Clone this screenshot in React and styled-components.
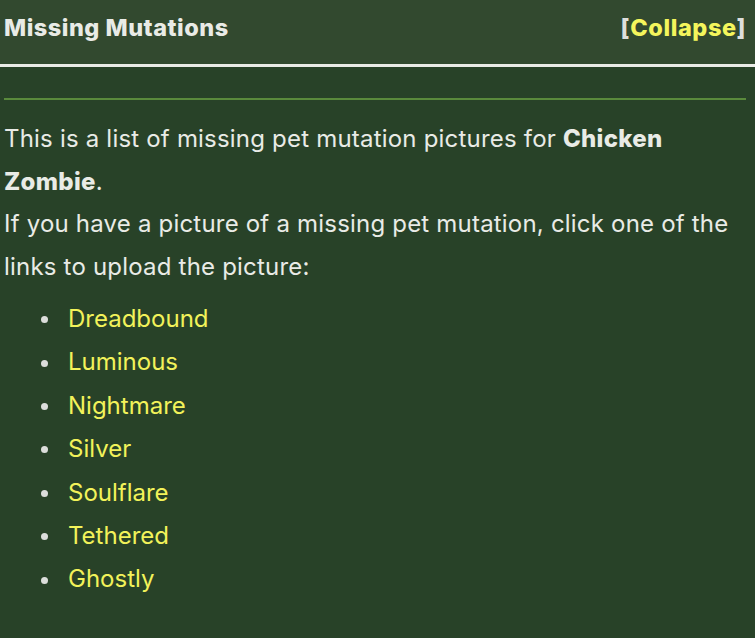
import React from "react";
import styled, { createGlobalStyle } from "styled-components";

const Global = createGlobalStyle`
  html, body { margin: 0; padding: 0; background: #284228; }
  body { font-family: Inter, "Noto Sans", sans-serif; }
`;

const Page = styled.div`
  width: 755px;
  height: 638px;
  background: #284228;
  overflow: hidden;
`;

const Header = styled.div`
  height: 67px;
  background: #32492f;
  border-bottom: 3px solid #e9ebe6;
  display: flex;
  align-items: center;
  justify-content: space-between;
  padding: 0 9px 10px 4px;
  box-sizing: border-box;
`;

const Title = styled.div`
  font-weight: 800;
  font-size: 23.5px;
  color: #e9ebe6;
  letter-spacing: 0.5px;
`;

const Toggle = styled.div`
  font-weight: 800;
  font-size: 23.5px;
  letter-spacing: 0.6px;
  color: #dedfdc;
`;

const ToggleLink = styled.span`
  color: #f4f55c;
`;

const Body = styled.div`
  padding: 31px 9px 0 4px;
`;

const Rule = styled.div`
  height: 2px;
  background: #5a8a3c;
  margin-bottom: 18px;
`;

const Para = styled.p`
  margin: 0;
  font-size: 24px;
  line-height: 42.5px;
  color: #e9ebe6;
  letter-spacing: 0.2px;
  b { font-weight: 800; letter-spacing: 0.3px; }
`;

const List = styled.ul`
  margin: 9px 0 0;
  padding: 0 0 0 37px;
  list-style: none;
`;

const Item = styled.li`
  display: flex;
  align-items: center;
  gap: 20px;
  font-size: 24px;
  line-height: 43.4px;
`;

const Dot = styled.span`
  width: 7px;
  height: 7px;
  border-radius: 50%;
  background: #dcdedb;
  flex: none;
  margin-top: 2px;
`;

const Link = styled.a`
  color: #f2f25a;
  text-decoration: none;
`;

const items = ["Dreadbound", "Luminous", "Nightmare", "Silver", "Soulflare", "Tethered", "Ghostly"];

export default function App() {
  return (
    <Page>
      <Global />
      <Header>
        <Title>Missing Mutations</Title>
        <Toggle>[<ToggleLink>Collapse</ToggleLink>]</Toggle>
      </Header>
      <Body>
        <Rule />
        <Para>
          This is a list of missing pet mutation pictures for <b>Chicken Zombie</b>.
        </Para>
        <Para>
          If you have a picture of a missing pet mutation, click one of the links to upload the picture:
        </Para>
        <List>
          {items.map((t) => (
            <Item key={t}><Dot /><Link href="#">{t}</Link></Item>
          ))}
        </List>
      </Body>
    </Page>
  );
}
